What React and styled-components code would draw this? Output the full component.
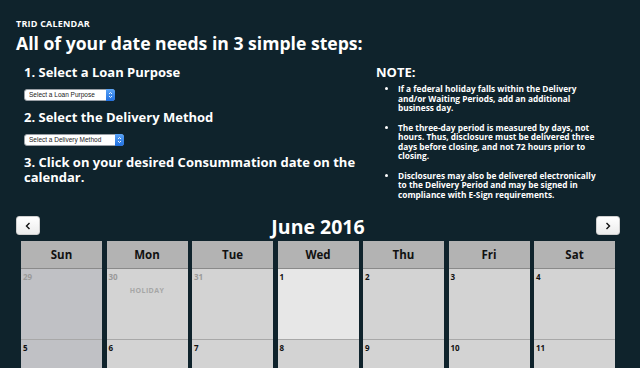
import React from "react"
import styled, { createGlobalStyle } from "styled-components"

const GlobalStyle = createGlobalStyle`
  html, body {
    margin: 0;
    padding: 0;
    background: #0f232c;
  }
  body {
    font-family: "Open Sans", "DejaVu Sans", sans-serif;
    color: #ffffff;
  }
`

const Page = styled.div`
  width: 640px;
  padding: 19px 20px 0 16px;
  box-sizing: border-box;
`

const Kicker = styled.div`
  font-size: 9px;
  font-weight: 700;
  letter-spacing: 0.2px;
  line-height: 10px;
`

const Headline = styled.h1`
  margin: 3px 0 0 0;
  font-size: 17.6px;
  font-weight: 700;
  line-height: 22px;
`

const Columns = styled.div`
  display: flex;
  margin-top: 11px;
`

const Steps = styled.div`
  width: 352px;
  padding-left: 8px;
  box-sizing: border-box;
`

const StepTitle = styled.h2`
  margin: ${p => (p.$first ? "0" : "9.5px")} 0 0 0;
  font-size: 13px;
  font-weight: 700;
  line-height: 15px;
`

const SelectWrap = styled.div`
  position: relative;
  margin-top: 8.5px;
  width: ${p => p.$width}px;
  height: 12px;
`

const Select = styled.select`
  appearance: none;
  display: block;
  width: 100%;
  height: 12px;
  margin: 0;
  padding: 0 12px 0 4px;
  border: 1px solid #9aa0a6;
  border-radius: 3px;
  background: #ffffff;
  font-family: "Liberation Sans", Arial, sans-serif;
  font-size: 6.5px;
  color: #222;
  line-height: 10px;
`

const Stepper = styled.span`
  position: absolute;
  right: 0;
  top: 0;
  width: 9px;
  height: 12px;
  border-radius: 0 3px 3px 0;
  background: linear-gradient(#5aa4f7, #1f6fe0);
  display: flex;
  align-items: center;
  justify-content: center;
  pointer-events: none;
`

const Notes = styled.div`
  flex: 1;
  padding-left: 8px;
`

const NoteTitle = styled.h2`
  margin: 0;
  font-size: 13px;
  font-weight: 700;
  line-height: 15px;
`

const NoteList = styled.ul`
  margin: 4px 0 0 0;
  padding-left: 22px;
  width: 208px;
  font-size: 8.3px;
  font-weight: 700;
  line-height: 9.5px;
`

const NoteItem = styled.li`
  margin-bottom: 10px;
  &:last-child {
    margin-bottom: 0;
  }
`

const Nav = styled.div`
  display: flex;
  align-items: center;
  justify-content: space-between;
  margin-top: 17px;
  height: 19px;
`

const NavButton = styled.button`
  width: 24px;
  height: 19px;
  padding: 0;
  border: 1px solid #cfcfcf;
  border-radius: 3px;
  background: linear-gradient(#ffffff, #ececec);
  display: flex;
  align-items: center;
  justify-content: center;
`

const Month = styled.div`
  font-size: 19.5px;
  font-weight: 700;
  line-height: 20px;
  margin-top: 2px;
`

const Grid = styled.div`
  display: grid;
  grid-template-columns: repeat(7, 1fr);
  grid-template-rows: 28px;
  grid-auto-rows: 70px;
  column-gap: 4.5px;
  margin: 6px 5px 0 5px;
`

const DayHead = styled.div`
  background: #b3b3b3;
  border-bottom: 1px solid #8a8a8a;
  color: #111;
  font-size: 11.5px;
  font-weight: 700;
  display: flex;
  align-items: center;
  justify-content: center;
`

const Cell = styled.div`
  background: ${p => (p.$today ? "#e7e7e7" : p.$weekend ? "#c0c1c5" : "#d3d3d3")};
  border-top: ${p => (p.$firstRow ? "none" : "1px solid #a8a8a8")};
  padding: 3px 2px;
  box-sizing: border-box;
`

const DayNum = styled.div`
  font-size: 8px;
  font-weight: 700;
  line-height: 9px;
  color: ${p => (p.$muted ? "#9a9a9a" : "#111")};
`

const Holiday = styled.div`
  margin-top: 5px;
  text-align: center;
  font-size: 7px;
  font-weight: 700;
  letter-spacing: 0.4px;
  color: #a6a6a6;
`

const days = ["Sun", "Mon", "Tue", "Wed", "Thu", "Fri", "Sat"]

const cells = [
  { n: 29, muted: true },
  { n: 30, muted: true, holiday: true },
  { n: 31, muted: true },
  { n: 1, today: true },
]
for (let d = 2; d <= 30; d++) cells.push({ n: d })
cells.push({ n: 1, muted: true }, { n: 2, muted: true })

const Chevron = ({ dir }) => (
  <svg width="6" height="8" viewBox="0 0 6 8">
    <path
      d={dir === "left" ? "M4.5 1 L1.5 4 L4.5 7" : "M1.5 1 L4.5 4 L1.5 7"}
      fill="none"
      stroke="#111"
      strokeWidth="1.4"
    />
  </svg>
)

const Arrows = () => (
  <svg width="5" height="8" viewBox="0 0 5 8">
    <path d="M1 3 L2.5 1.5 L4 3" fill="none" stroke="#fff" strokeWidth="0.9" />
    <path d="M1 5 L2.5 6.5 L4 5" fill="none" stroke="#fff" strokeWidth="0.9" />
  </svg>
)

const App = () => (
  <>
    <GlobalStyle />
    <Page>
      <Kicker>TRID CALENDAR</Kicker>
      <Headline>All of your date needs in 3 simple steps:</Headline>
      <Columns>
        <Steps>
          <StepTitle $first>1. Select a Loan Purpose</StepTitle>
          <SelectWrap $width={91}>
            <Select defaultValue="">
              <option value="">Select a Loan Purpose</option>
            </Select>
            <Stepper><Arrows /></Stepper>
          </SelectWrap>
          <StepTitle>2. Select the Delivery Method</StepTitle>
          <SelectWrap $width={100}>
            <Select defaultValue="">
              <option value="">Select a Delivery Method</option>
            </Select>
            <Stepper><Arrows /></Stepper>
          </SelectWrap>
          <StepTitle>3. Click on your desired Consummation date on the calendar.</StepTitle>
        </Steps>
        <Notes>
          <NoteTitle>NOTE:</NoteTitle>
          <NoteList>
            <NoteItem>If a federal holiday falls within the Delivery and/or Waiting Periods, add an additional business day.</NoteItem>
            <NoteItem>The three-day period is measured by days, not hours. Thus, disclosure must be delivered three days before closing, and not 72 hours prior to closing.</NoteItem>
            <NoteItem>Disclosures may also be delivered electronically to the Delivery Period and may be signed in compliance with E-Sign requirements.</NoteItem>
          </NoteList>
        </Notes>
      </Columns>
      <Nav>
        <NavButton aria-label="Previous month"><Chevron dir="left" /></NavButton>
        <Month>June 2016</Month>
        <NavButton aria-label="Next month"><Chevron dir="right" /></NavButton>
      </Nav>
      <Grid>
        {days.map(d => <DayHead key={d}>{d}</DayHead>)}
        {cells.map((c, i) => (
          <Cell key={i} $weekend={i % 7 === 0} $today={c.today} $firstRow={i < 7}>
            <DayNum $muted={c.muted}>{c.n}</DayNum>
            {c.holiday && <Holiday>HOLIDAY</Holiday>}
          </Cell>
        ))}
      </Grid>
    </Page>
  </>
)

export default App
